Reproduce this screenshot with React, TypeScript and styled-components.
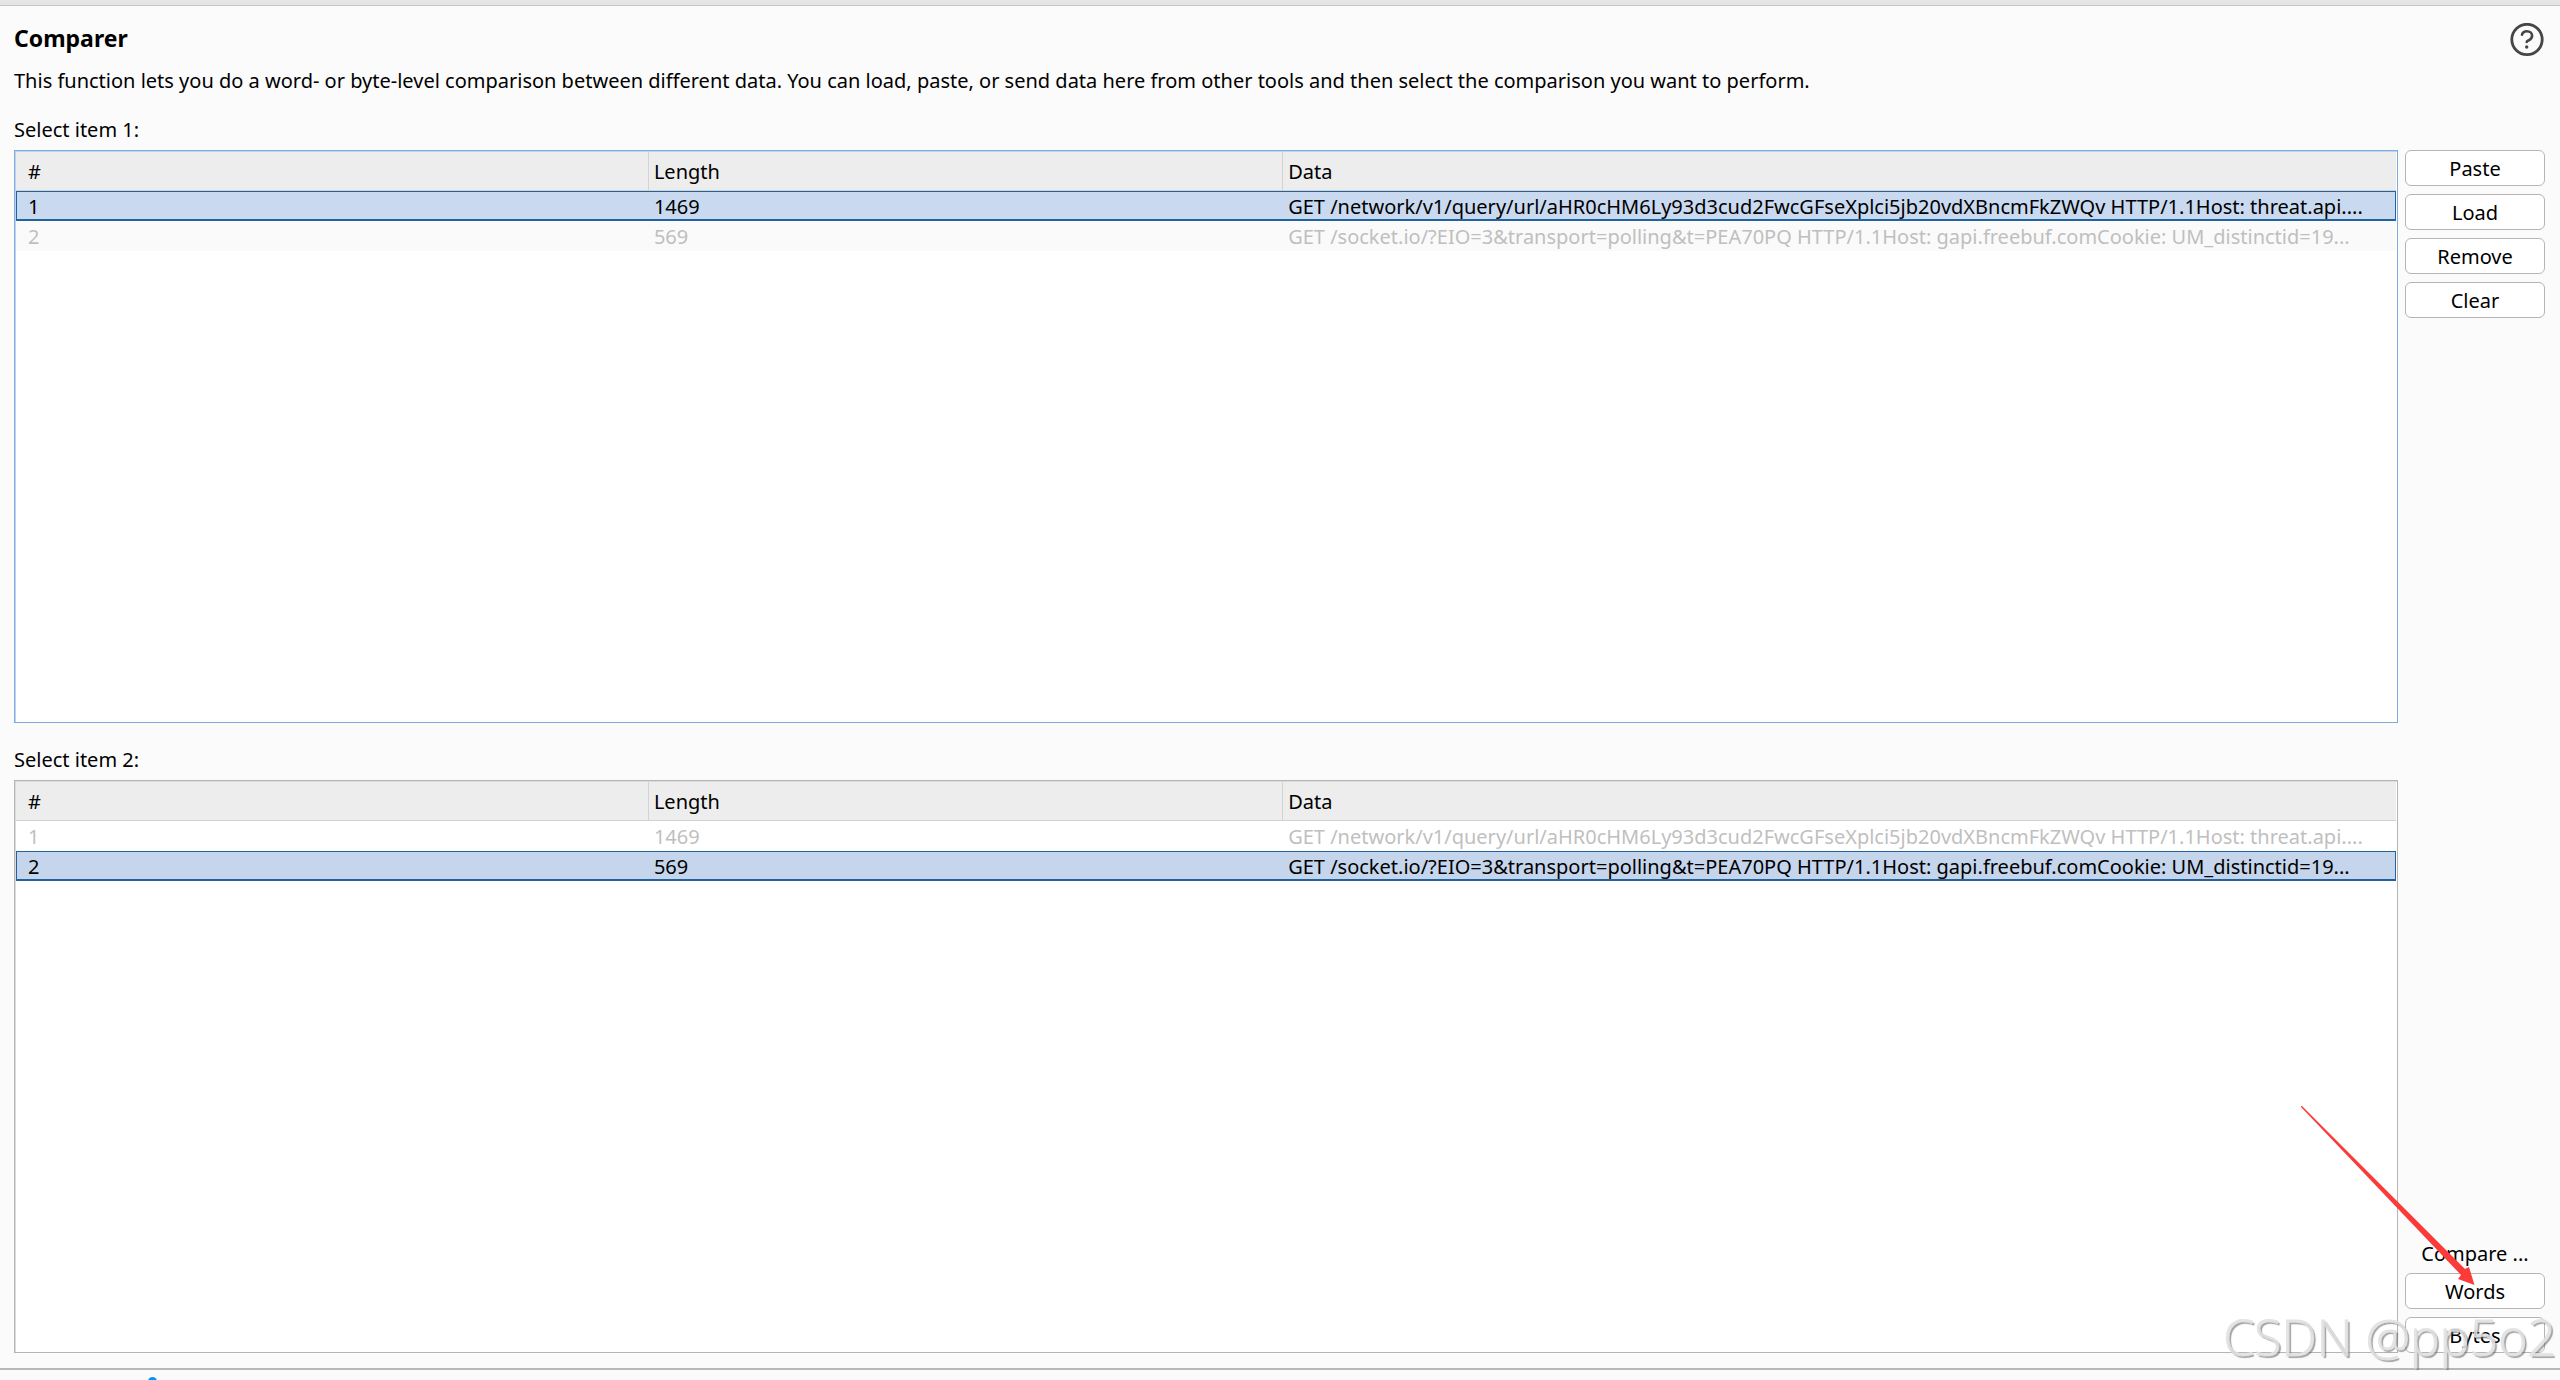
import React, { useState } from "react";
import styled, { createGlobalStyle } from "styled-components";

const GlobalStyle = createGlobalStyle`
  *, *::before, *::after { box-sizing: border-box; }
  body {
    margin: 0;
    background: #fbfbfb;
    color: #000;
    font-family: "Noto Sans", "Open Sans", sans-serif;
    font-size: 20px;
    line-height: 30px;
  }
`;

const Shell = styled.div`
  position: relative;
  display: flex;
  flex-direction: column;
  height: 100vh;
  overflow: hidden;
`;

const TopStrip = styled.div`
  flex: none;
  height: 6px;
  background: #e5e5e5;
  border-bottom: 1px solid #c6c6c6;
`;

const Page = styled.main`
  flex: 1;
  min-height: 0;
  display: flex;
  flex-direction: column;
  padding: 17px 15px 15px 14px;
`;

const Header = styled.header`
  display: flex;
  justify-content: space-between;
  align-items: flex-start;
  height: 43px;
`;

const Title = styled.h1`
  margin: 0;
  font-size: 23px;
  font-weight: 700;
  line-height: 30px;
`;

const HelpButton = styled.button`
  display: flex;
  margin-right: 1px;
  padding: 0;
  border: 0;
  background: none;
  color: #464646;
`;

const Description = styled.p`
  margin: 0 0 14px;
`;

const Sections = styled.div`
  flex: 1;
  min-height: 0;
  display: flex;
  flex-direction: column;
  gap: 17px;
`;

const Section = styled.section`
  flex: 1;
  min-height: 0;
  display: flex;
  flex-direction: column;
`;

const SectionLabel = styled.h2`
  margin: 0;
  font-size: 20px;
  font-weight: 400;
  line-height: 40px;
`;

const SectionBody = styled.div`
  flex: 1;
  min-height: 0;
  display: flex;
  gap: 7px;
`;

const TablePane = styled.div<{ $focused: boolean }>`
  flex: 1;
  min-width: 0;
  background: #fff;
  border: 1px solid ${(p) => (p.$focused ? "#7facdf" : "#b9b4b4")};
  box-shadow: inset 1px 1px 0 ${(p) => (p.$focused ? "#bdd4f0" : "#dcdada")};
  padding: 1px 1px 0;
`;

const Table = styled.table`
  width: 100%;
  table-layout: fixed;
  border-collapse: separate;
  border-spacing: 0;
`;

const Column = styled.col<{ $width?: string }>`
  width: ${(p) => p.$width ?? "auto"};
`;

const HeadCell = styled.th`
  height: 39px;
  padding: 2px 0 0 5px;
  background: #ededed;
  border-bottom: 1px solid #d3d3d3;
  border-left: 1px solid #d3d3d3;
  font-weight: 400;
  text-align: left;

  &:first-child {
    padding-left: 12px;
    border-left: 0;
  }
`;

const Row = styled.tr<{ $selected: boolean; $focused: boolean; $striped: boolean }>`
  color: ${(p) => (p.$selected ? "#000" : "#bfbfbf")};
  background: ${(p) =>
    p.$selected ? (p.$focused ? "#c9daf0" : "#c5d5ec") : p.$striped ? "#fafafa" : "#fff"};

  td {
    border-top: 1px solid ${(p) => (p.$selected ? "#22629d" : "transparent")};
    border-bottom: 2px solid ${(p) => (p.$selected ? "#22629d" : "transparent")};
  }
  td:first-child {
    border-left: 1px solid ${(p) => (p.$selected ? "#22629d" : "transparent")};
  }
  td:last-child {
    border-right: 1px solid ${(p) => (p.$selected ? "#22629d" : "transparent")};
  }
`;

const Cell = styled.td`
  height: 30px;
  padding: 3px 0 0 6px;
  line-height: 24px;
  overflow: hidden;
  white-space: nowrap;

  &:first-child {
    padding-left: 11px;
  }
`;

const Actions = styled.div<{ $bottom?: boolean }>`
  flex: none;
  width: 140px;
  display: flex;
  flex-direction: column;
  justify-content: ${(p) => (p.$bottom ? "flex-end" : "flex-start")};
  gap: 8px;
`;

const ActionsLabel = styled.span`
  text-align: center;
  line-height: 22px;
`;

const Button = styled.button`
  height: 36px;
  padding: 2px 0 0;
  border: 1px solid #b9b4b4;
  border-radius: 6px;
  background: #fff;
  color: #000;
  font: inherit;
  line-height: 30px;
`;

const BottomBar = styled.footer`
  flex: none;
  height: 12px;
  padding: 7px 0 0 148px;
  border-top: 2px solid #b9b7b7;
  overflow: hidden;
`;

const Marker = styled.div`
  width: 9px;
  height: 9px;
  border-radius: 50%;
  background: #0a91f5;
`;

const Arrow = styled.svg`
  position: absolute;
  right: 84px;
  bottom: 93px;
  pointer-events: none;
`;

const Watermark = styled.div`
  position: absolute;
  right: 4px;
  bottom: 13px;
  color: rgba(224, 224, 224, 0.85);
  font-family: "Open Sans", "Noto Sans", sans-serif;
  font-weight: 300;
  font-size: 50px;
  line-height: 60px;
  white-space: nowrap;
  text-shadow: 2px 2px 1px rgba(100, 100, 100, 0.6);
  -webkit-text-stroke: 1px rgba(224, 224, 224, 0.85);
  pointer-events: none;
`;

const items = [
  {
    id: 1,
    length: 1469,
    data: "GET /network/v1/query/url/aHR0cHM6Ly93d3cud2FwcGFseXplci5jb20vdXBncmFkZWQv HTTP/1.1Host: threat.api....",
  },
  {
    id: 2,
    length: 569,
    data: "GET /socket.io/?EIO=3&transport=polling&t=PEA70PQ HTTP/1.1Host: gapi.freebuf.comCookie: UM_distinctid=19...",
  },
];

function HelpIcon() {
  return (
    <svg width="34" height="34" viewBox="0 0 34 34" fill="none" stroke="currentColor" strokeLinecap="round" strokeLinejoin="round">
      <circle cx="17" cy="16.500" r="15.200" strokeWidth="2.800" />
      <path d="M12 11.800C12.500 9.200 14.500 8.200 16.900 8.200c2.900 0 5.200 1.800 5.200 4.500 0 2.300-1.400 3.500-3 4.400-1.300.700-2.400 1-2.400 1.900" strokeWidth="2.600" />
      <circle cx="16.700" cy="24" r="1.700" fill="currentColor" stroke="none" />
    </svg>
  );
}

function ItemTable({ label, focused, initial }: { label: string; focused: boolean; initial: number }) {
  const [selected, setSelected] = useState(initial);
  return (
    <TablePane $focused={focused}>
      <Table aria-label={label}>
        <colgroup>
          <Column $width="26.55%" />
          <Column $width="26.65%" />
          <Column />
        </colgroup>
        <thead>
          <tr>
            <HeadCell>#</HeadCell>
            <HeadCell>Length</HeadCell>
            <HeadCell>Data</HeadCell>
          </tr>
        </thead>
        <tbody>
          {items.map((item, index) => (
            <Row
              key={item.id}
              $selected={item.id === selected}
              $focused={focused}
              $striped={index % 2 === 1}
              onClick={() => setSelected(item.id)}
            >
              <Cell>{item.id}</Cell>
              <Cell>{item.length}</Cell>
              <Cell>{item.data}</Cell>
            </Row>
          ))}
        </tbody>
      </Table>
    </TablePane>
  );
}

export default function App() {
  return (
    <Shell>
      <GlobalStyle />
      <TopStrip />
      <Page>
        <Header>
          <Title>Comparer</Title>
          <HelpButton type="button" aria-label="Help">
            <HelpIcon />
          </HelpButton>
        </Header>
        <Description>
          This function lets you do a word- or byte-level comparison between different data. You can load, paste, or
          send data here from other tools and then select the comparison you want to perform.
        </Description>
        <Sections>
          <Section>
            <SectionLabel>Select item 1:</SectionLabel>
            <SectionBody>
              <ItemTable label="Item 1" focused initial={1} />
              <Actions>
                <Button type="button">Paste</Button>
                <Button type="button">Load</Button>
                <Button type="button">Remove</Button>
                <Button type="button">Clear</Button>
              </Actions>
            </SectionBody>
          </Section>
          <Section>
            <SectionLabel>Select item 2:</SectionLabel>
            <SectionBody>
              <ItemTable label="Item 2" focused={false} initial={2} />
              <Actions $bottom>
                <ActionsLabel>Compare ...</ActionsLabel>
                <Button type="button">Words</Button>
                <Button type="button">Bytes</Button>
              </Actions>
            </SectionBody>
          </Section>
        </Sections>
      </Page>
      <BottomBar>
        <Marker />
      </BottomBar>
      <Arrow width="176" height="181" viewBox="0 0 176 181" aria-hidden="true">
        <path d="M1 0 L2 0 L165 163 L169 161 L174.500 179 L158 173 L161 169 L1 1 Z" fill="#fb3a3a" />
      </Arrow>
      <Watermark>CSDN @pp5o2</Watermark>
    </Shell>
  );
}
